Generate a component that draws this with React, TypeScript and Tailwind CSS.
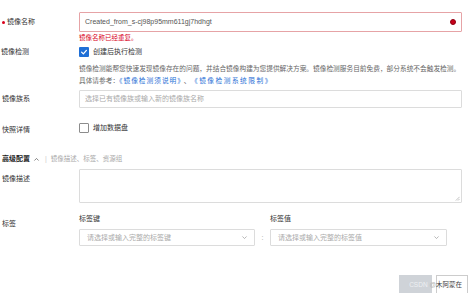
import React from 'react';

const Checkbox = ({ checked }: { checked?: boolean }) => (
  checked ? (
    <span className="w-[10px] h-[10px] bg-[#1f6fd6] rounded-[1px] flex items-center justify-center">
      <svg viewBox="0 0 10 10" className="w-[8px] h-[8px]">
        <path d="M2 5.2 L4.2 7.3 L8 3" fill="none" stroke="#fff" strokeWidth={1.6} strokeLinecap="round" strokeLinejoin="round" />
      </svg>
    </span>
  ) : (
    <span className="w-[10px] h-[10px] bg-white border border-[#8c8c8c] rounded-[1px]" />
  )
);

const Chevron = ({ up }: { up?: boolean }) => (
  <svg viewBox="0 0 10 10" className="w-[7px] h-[7px]">
    <path d={up ? 'M2 6.5 L5 3.5 L8 6.5' : 'M2 3.5 L5 6.5 L8 3.5'} fill="none" stroke={up ? '#555' : '#999'} strokeWidth={1} />
  </svg>
);

const Select = ({ placeholder }: { placeholder: string }) => (
  <div className="h-[17px] border border-[#dcdcdc] rounded-[1px] flex items-center justify-between pl-[7px] pr-[6px] text-[#aaa]">
    <span>{placeholder}</span>
    <Chevron />
  </div>
);

export default function App() {
  return (
    <div className="w-[474px] h-[293px] bg-white relative overflow-hidden text-[7px] leading-[10px] text-[#333] font-['Liberation_Sans','Noto_Sans_CJK_SC',sans-serif]">
      <div className="pl-[2px] pr-[12px] pt-[12px]">
        {/* 镜像名称 */}
        <div className="flex">
          <div className="w-[77px] h-[20px] flex items-center gap-[2px]">
            <span className="w-[3px] h-[3px] rounded-full bg-[#d9001b]" />
            <span>镜像名称</span>
          </div>
          <div className="flex-1 h-[20px] border border-[#e6a3a6] rounded-[1px] flex items-center justify-between pl-[5px] pr-[5px]">
            <span className="text-[#555]">Created_from_s-cj98p95mm611gj7hdhgt</span>
            <span className="w-[6px] h-[6px] rounded-full bg-[#c8001a] border border-[#8e0012]" />
          </div>
        </div>
        <div className="ml-[77px] mt-[1px] text-[6.5px] text-[#d9001b]">镜像名称已经重复。</div>

        {/* 镜像检测 */}
        <div className="flex mt-[3px] h-[11px] items-center">
          <div className="w-[77px] -ml-[1px]">镜像检测</div>
          <div className="flex items-center gap-[4px] ml-[1px]">
            <Checkbox checked />
            <span>创建后执行检测</span>
          </div>
        </div>
        <div className="ml-[77px] mt-[6px] text-[6.7px] leading-[12px] text-[#666]">
          <div className="whitespace-nowrap">镜像检测能帮您快速发现镜像存在的问题，并结合镜像构建为您提供解决方案。镜像检测服务目前免费，部分系统不会触发检测。</div>
          <div className="whitespace-nowrap">
            具体请参考：<span className="tracking-[1px] text-[#1f6fd6]">《镜像检测须说明》</span>
            <span className="ml-[2px]">、</span>
            <span className="ml-[4px] tracking-[1.5px] text-[#1f6fd6]">《镜像检测系统限制》</span>
          </div>
        </div>

        {/* 镜像族系 */}
        <div className="flex mt-[3px]">
          <div className="w-[77px] h-[18px] flex items-center">镜像族系</div>
          <div className="flex-1 h-[18px] border border-[#dcdcdc] rounded-[1px] flex items-center pl-[5px] text-[#aaa]">
            选择已有镜像族或输入新的镜像族名称
          </div>
        </div>

        {/* 快照详情 */}
        <div className="flex mt-[15px] h-[10px] items-center">
          <div className="w-[77px] pt-[3px]">快照详情</div>
          <div className="flex items-center gap-[4px]">
            <Checkbox />
            <span>增加数据盘</span>
          </div>
        </div>

        {/* 高级配置 */}
        <div className="flex mt-[21px] h-[10px] items-center gap-[3px]">
          <span className="font-bold text-[#222]">高级配置</span>
          <Chevron up />
          <span className="text-[#ccc] ml-[2px]">|</span>
          <span className="text-[#aaa] text-[6.5px] ml-[1px]">镜像描述、标签、资源组</span>
        </div>

        {/* 镜像描述 */}
        <div className="flex mt-[5px]">
          <div className="w-[77px] pt-[5px]">镜像描述</div>
          <div className="flex-1 h-[34px] border border-[#dcdcdc] rounded-[1px] relative">
            <svg viewBox="0 0 6 6" className="absolute right-[1px] bottom-[1px] w-[5px] h-[5px]">
              <path d="M1 5.5 L5.5 1 M3.5 5.5 L5.5 3.5" stroke="#999" strokeWidth={0.7} />
            </svg>
          </div>
        </div>

        {/* 标签 */}
        <div className="flex mt-[11px]">
          <div className="w-[77px] pt-[5px]">标签</div>
          <div className="flex items-end">
            <div className="w-[176px]">
              <div className="h-[10px]">标签键</div>
              <div className="mt-[5px]">
                <Select placeholder="请选择或输入完整的标签键" />
              </div>
            </div>
            <div className="w-[15px] h-[17px] flex items-center justify-center text-[#999]">:</div>
            <div className="w-[177px]">
              <div className="h-[10px]">标签值</div>
              <div className="mt-[5px]">
                <Select placeholder="请选择或输入完整的标签值" />
              </div>
            </div>
          </div>
        </div>
      </div>

      {/* 底部按钮 */}
      <div className="flex justify-end gap-[4px] pr-[6px] mt-[29px] relative">
        <div className="w-[33px] h-[19px] bg-[#cfd3d8]" />
        <div className="w-[32px] h-[19px] bg-white border border-[#cccccc]" />
        <div className="absolute right-[12px] top-[5px] text-[6.5px] leading-[10px] whitespace-nowrap">
          <span className="text-[#eef0f3]">CSDN</span>
          <span className="text-[#b5b5b5]"> @</span>
          <span className="text-[#444]">木阿蒙在</span>
        </div>
      </div>
    </div>
  );
}
